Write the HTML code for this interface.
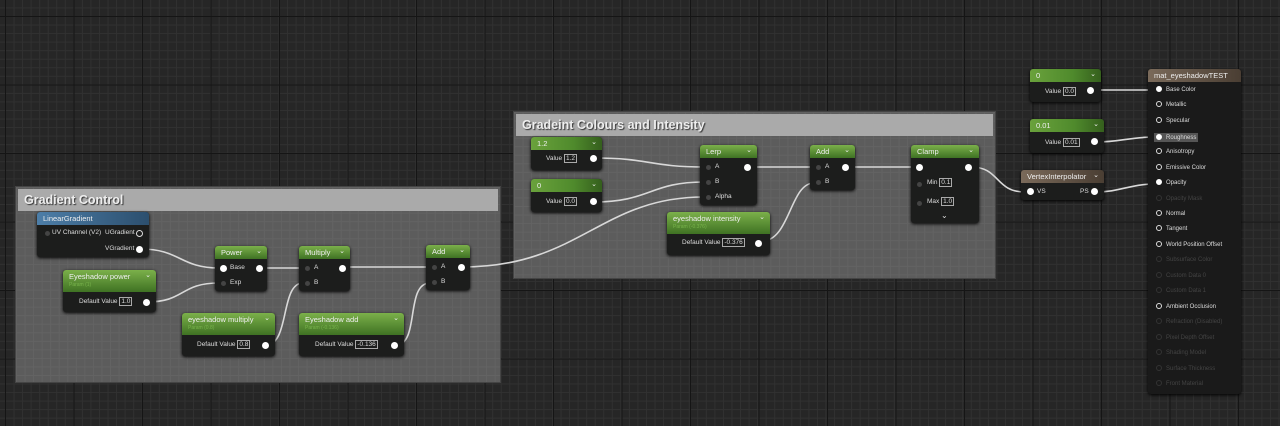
<!DOCTYPE html>
<html><head><meta charset="utf-8">
<style>
*{margin:0;padding:0;box-sizing:border-box}
body{width:1280px;height:426px;overflow:hidden;background:#262626;font-family:"Liberation Sans",sans-serif;position:relative;
background-image:
linear-gradient(90deg,#151515 1px,transparent 1px),
linear-gradient(#151515 1px,transparent 1px),
linear-gradient(90deg,#313131 1px,transparent 1px),
linear-gradient(#313131 1px,transparent 1px);
background-size:68.5px 68.5px,68.5px 68.5px,8.56px 8.56px,8.56px 8.56px;
background-position:5px 16px,5px 16px,5px 16px,5px 16px;}
.cm{position:absolute;background:#5c5c5c;border:1px solid #444;
background-image:linear-gradient(90deg,#636363 1px,transparent 1px),linear-gradient(#636363 1px,transparent 1px);background-size:8.56px 8.56px}
.cm .h{background:#aaa;height:22px;color:#eee;font-weight:bold;font-size:12.5px;padding:4px 6px;text-shadow:1px 1px 1px #333;margin:2px}
.n{position:absolute;background:#1c1d1c;border-radius:3px;box-shadow:0 1px 3px #000;color:#ddd;font-size:6.5px}
.n .t{height:13px;border-radius:3px 3px 0 0;padding:2px 6px;color:#eee;font-size:7.5px;position:relative}
.g{background:linear-gradient(#7bb04a,#3f7223)}
.gg{background:linear-gradient(90deg,#6aa23c,#4f8a2c 60%,#355f1d)}
.b{background:linear-gradient(90deg,#4d7ea8,#2c4f6e)}
.br{background:linear-gradient(90deg,#7a6a5a,#4a3e33)}
.t .v{position:absolute;right:5px;top:1px;font-size:7px}
.t .s{display:block;font-size:5px;color:#8ecf5c;opacity:.6;margin-top:1px}
.tall{height:22px!important}
.r{position:absolute;white-space:nowrap}
.box{border:1px solid #aaa;padding:0 1px;font-size:6.5px}
.pin{position:absolute;width:7px;height:7px;border-radius:50%;background:#fff}
.pin.e{background:none;border:1.5px solid #ddd}
.pin.d{background:#444;width:5px;height:5px}
.mat .r{left:8px;font-size:6px;color:#ddd}
.mat .r.o{color:#444}
.mat .r i{display:inline-block;width:6px;height:6px;border-radius:50%;border:1.5px solid #ddd;margin-right:4px;vertical-align:-1px}
.mat .r.f i{background:#fff;border-color:#fff}
.mat .r.o i{border-color:#333}
</style></head><body>

<div class="cm" style="left:15px;top:186px;width:486px;height:197px"><div class="h">Gradient Control</div></div>
<div class="cm" style="left:513px;top:111px;width:483px;height:168px"><div class="h">Gradeint Colours and Intensity</div></div>

<svg width="1280" height="426" style="position:absolute;left:0;top:0" fill="none" stroke="#d8d8d8" stroke-width="1.6">
<path d="M141 249 C180 249,180 268,219 268"/>
<path d="M147 302 C185 302,180 283,219 283"/>
<path d="M259 268 L302 268"/>
<path d="M266 345 C290 345,280 283,303 283"/>
<path d="M343 267 L430 267"/>
<path d="M396 345 C420 345,405 283,430 283"/>
<path d="M462 267 C580 267,600 197,704 197"/>
<path d="M594 158 C650 158,650 167,704 167"/>
<path d="M594 202 C650 202,650 182,704 182"/>
<path d="M748 167 L814 167"/>
<path d="M762 241 C790 241,790 183,814 183"/>
<path d="M847 167 L915 167"/>
<path d="M971 167 C1000 167,995 192,1025 192"/>
<path d="M1093 90 L1155 90"/>
<path d="M1097 142 C1120 142,1130 137,1155 137"/>
<path d="M1096 192 C1120 192,1130 184,1155 184"/>
</svg>

<!-- LinearGradient -->
<div class="n" style="left:37px;top:212px;width:112px;height:45px">
<div class="t b">LinearGradient</div>
<div class="pin d" style="left:8px;top:19px"></div>
<div class="r" style="left:15px;top:17px">UV Channel (V2)</div>
<div class="r" style="left:68px;top:17px">UGradient</div><div class="pin e" style="left:99px;top:18px"></div>
<div class="r" style="left:68px;top:33px">VGradient</div><div class="pin" style="left:99px;top:34px"></div>
</div>
<!-- Eyeshadow power -->
<div class="n" style="left:63px;top:270px;width:93px;height:42px">
<div class="t g tall">Eyeshadow power<span class="s">Param (1)</span><span class="v">⌄</span></div>
<div class="r" style="left:16px;top:28px">Default Value <span class="box">1.0</span></div><div class="pin" style="left:80px;top:29px"></div>
</div>
<!-- Power -->
<div class="n" style="left:215px;top:246px;width:52px;height:45px">
<div class="t g">Power<span class="v">⌄</span></div>
<div class="pin" style="left:5px;top:19px"></div><div class="r" style="left:15px;top:18px">Base</div><div class="pin" style="left:41px;top:19px"></div>
<div class="pin d" style="left:6px;top:35px"></div><div class="r" style="left:15px;top:33px">Exp</div>
</div>
<!-- Multiply -->
<div class="n" style="left:299px;top:246px;width:51px;height:45px">
<div class="t g">Multiply<span class="v">⌄</span></div>
<div class="pin d" style="left:6px;top:20px"></div><div class="r" style="left:15px;top:18px">A</div><div class="pin" style="left:40px;top:19px"></div>
<div class="pin d" style="left:6px;top:35px"></div><div class="r" style="left:15px;top:33px">B</div>
</div>
<!-- Add -->
<div class="n" style="left:426px;top:245px;width:44px;height:45px">
<div class="t g">Add<span class="v">⌄</span></div>
<div class="pin d" style="left:6px;top:20px"></div><div class="r" style="left:15px;top:18px">A</div><div class="pin" style="left:32px;top:19px"></div>
<div class="pin d" style="left:6px;top:35px"></div><div class="r" style="left:15px;top:33px">B</div>
</div>
<!-- eyeshadow multiply -->
<div class="n" style="left:182px;top:313px;width:93px;height:43px">
<div class="t g tall">eyeshadow multiply<span class="s">Param (0.8)</span><span class="v">⌄</span></div>
<div class="r" style="left:15px;top:28px">Default Value <span class="box">0.8</span></div><div class="pin" style="left:80px;top:29px"></div>
</div>
<!-- Eyeshadow add -->
<div class="n" style="left:299px;top:313px;width:105px;height:43px">
<div class="t g tall">Eyeshadow add<span class="s">Param (-0.136)</span><span class="v">⌄</span></div>
<div class="r" style="left:16px;top:28px">Default Value <span class="box">-0.136</span></div><div class="pin" style="left:92px;top:29px"></div>
</div>

<!-- 1.2 -->
<div class="n" style="left:531px;top:137px;width:71px;height:33px">
<div class="t gg">1.2<span class="v">⌄</span></div>
<div class="r" style="left:15px;top:18px">Value <span class="box">1.2</span></div><div class="pin" style="left:59px;top:18px"></div>
</div>
<div class="n" style="left:531px;top:179px;width:71px;height:33px">
<div class="t gg">0<span class="v">⌄</span></div>
<div class="r" style="left:15px;top:19px">Value <span class="box">0.0</span></div><div class="pin" style="left:59px;top:19px"></div>
</div>
<!-- Lerp -->
<div class="n" style="left:700px;top:145px;width:57px;height:60px">
<div class="t g">Lerp<span class="v">⌄</span></div>
<div class="pin d" style="left:6px;top:20px"></div><div class="r" style="left:15px;top:18px">A</div><div class="pin" style="left:44px;top:19px"></div>
<div class="pin d" style="left:6px;top:35px"></div><div class="r" style="left:15px;top:33px">B</div>
<div class="pin d" style="left:6px;top:50px"></div><div class="r" style="left:15px;top:48px">Alpha</div>
</div>
<!-- Add2 -->
<div class="n" style="left:810px;top:145px;width:45px;height:45px">
<div class="t g">Add<span class="v">⌄</span></div>
<div class="pin d" style="left:6px;top:20px"></div><div class="r" style="left:15px;top:18px">A</div><div class="pin" style="left:32px;top:19px"></div>
<div class="pin d" style="left:6px;top:35px"></div><div class="r" style="left:15px;top:33px">B</div>
</div>
<!-- Clamp -->
<div class="n" style="left:911px;top:145px;width:68px;height:78px">
<div class="t g">Clamp<span class="v">⌄</span></div>
<div class="pin" style="left:5px;top:19px"></div><div class="pin" style="left:54px;top:19px"></div>
<div class="pin d" style="left:6px;top:37px"></div><div class="r" style="left:16px;top:34px">Min <span class="box">0.1</span></div>
<div class="pin d" style="left:6px;top:56px"></div><div class="r" style="left:16px;top:53px">Max <span class="box">1.0</span></div>
<div class="r" style="left:30px;top:66px;font-size:8px">⌄</div>
</div>
<!-- eyeshadow intensity -->
<div class="n" style="left:667px;top:212px;width:103px;height:43px">
<div class="t g tall">eyeshadow intensity<span class="s">Param (-0.376)</span><span class="v">⌄</span></div>
<div class="r" style="left:15px;top:27px">Default Value <span class="box">-0.376</span></div><div class="pin" style="left:88px;top:28px"></div>
</div>

<!-- right -->
<div class="n" style="left:1030px;top:69px;width:71px;height:33px">
<div class="t gg">0<span class="v">⌄</span></div>
<div class="r" style="left:15px;top:19px">Value <span class="box">0.0</span></div><div class="pin" style="left:57px;top:18px"></div>
</div>
<div class="n" style="left:1030px;top:119px;width:74px;height:34px">
<div class="t gg">0.01<span class="v">⌄</span></div>
<div class="r" style="left:15px;top:20px">Value <span class="box">0.01</span></div><div class="pin" style="left:61px;top:19px"></div>
</div>
<div class="n" style="left:1021px;top:170px;width:83px;height:30px">
<div class="t br">VertexInterpolator<span class="v">⌄</span></div>
<div class="pin" style="left:6px;top:18px"></div><div class="r" style="left:16px;top:18px">VS</div>
<div class="r" style="left:59px;top:18px">PS</div><div class="pin" style="left:70px;top:18px"></div>
</div>

<div class="n mat" style="left:1148px;top:69px;width:93px;height:325px;background:#1a1a1a">
<div class="t br">mat_eyeshadowTEST</div>
<div class="r f" style="top:17px"><i></i>Base Color</div>
<div class="r" style="top:32px"><i></i>Metallic</div>
<div class="r" style="top:48px"><i></i>Specular</div>
<div class="r f" style="top:64px;left:6px;background:#555;padding:1px 2px"><i></i>Roughness</div>
<div class="r" style="top:79px"><i></i>Anisotropy</div>
<div class="r" style="top:95px"><i></i>Emissive Color</div>
<div class="r f" style="top:110px"><i></i>Opacity</div>
<div class="r o" style="top:126px"><i></i>Opacity Mask</div>
<div class="r" style="top:141px"><i></i>Normal</div>
<div class="r" style="top:156px"><i></i>Tangent</div>
<div class="r" style="top:172px"><i></i>World Position Offset</div>
<div class="r o" style="top:187px"><i></i>Subsurface Color</div>
<div class="r o" style="top:203px"><i></i>Custom Data 0</div>
<div class="r o" style="top:218px"><i></i>Custom Data 1</div>
<div class="r" style="top:234px"><i></i>Ambient Occlusion</div>
<div class="r o" style="top:249px"><i></i>Refraction (Disabled)</div>
<div class="r o" style="top:265px"><i></i>Pixel Depth Offset</div>
<div class="r o" style="top:280px"><i></i>Shading Model</div>
<div class="r o" style="top:296px"><i></i>Surface Thickness</div>
<div class="r o" style="top:311px"><i></i>Front Material</div>
</div>
</body></html>
